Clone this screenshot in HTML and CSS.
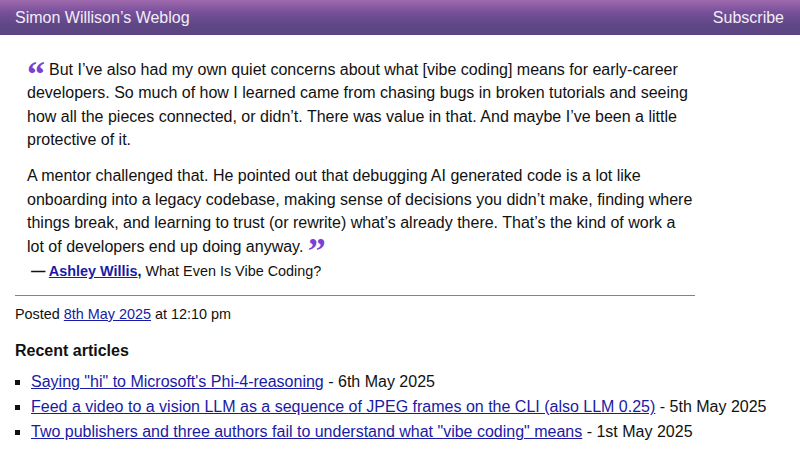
FILE: index.html
```html
<!DOCTYPE html>
<html>
<head>
<meta charset="utf-8">
<link rel="stylesheet" href="styles.css">
</head>
<body>
<header class="top">
  <a class="brand" href="#">Simon Willison’s Weblog</a>
  <a class="sub" href="#">Subscribe</a>
</header>
<main class="page">
  <div class="entry">
    <blockquote class="quote">
      <p><span class="qm open">“</span>But I’ve also had my own quiet concerns about what [vibe coding] means for early-career developers. So much of how I learned came from chasing bugs in broken tutorials and seeing how all the pieces connected, or didn’t. There was value in that. And maybe I’ve been a little protective of it.</p>
      <p>A mentor challenged that. He pointed out that debugging AI generated code is a lot like onboarding into a legacy codebase, making sense of decisions you didn’t make, finding where things break, and learning to trust (or rewrite) what’s already there. That’s the kind of work a lot of developers end up doing anyway. <span class="qm close">”</span></p>
    </blockquote>
    <p class="cite">— <a href="#">Ashley Willis</a>, <span class="src">What Even Is Vibe Coding?</span></p>
    <div class="meta">Posted <a href="#">8th May 2025</a> at 12:10 pm</div>
  </div>
  <section class="recent">
    <h3>Recent articles</h3>
    <ul>
      <li><a href="#">Saying "hi" to Microsoft's Phi-4-reasoning</a> - 6th May 2025</li>
      <li><a href="#">Feed a video to a vision LLM as a sequence of JPEG frames on the CLI (also LLM 0.25)</a> - 5th May 2025</li>
      <li><a href="#">Two publishers and three authors fail to understand what "vibe coding" means</a> - 1st May 2025</li>
    </ul>
  </section>
</main>
</body>
</html>
```
FILE: styles.css
```css
html, body {
  margin: 0;
  padding: 0;
  background: #fff;
}
body {
  font-family: "Liberation Sans", Arial, sans-serif;
  font-size: 16px;
  color: #111;
}
.top {
  display: flex;
  justify-content: space-between;
  align-items: center;
  height: 35px;
  padding: 0 16px 0 15px;
  background: linear-gradient(to bottom, #a06aae 0%, #76509a 35%, #5f4785 70%, #5d4482 100%);
}
.top a {
  color: #f3ecf8;
  text-decoration: none;
  font-size: 16px;
  line-height: 1;
}
.page {
  padding: 0 15px;
}
.entry {
  width: 680px;
}
.quote {
  margin: 23px 0 0 12px;
  padding: 0;
}
.quote p {
  margin: 0 0 12.7px;
  line-height: 23.4px;
}
.quote p:last-child {
  margin-bottom: 0;
}
.qm {
  display: inline-block;
  font-family: "Liberation Serif", "Times New Roman", serif;
  font-weight: bold;
  color: #7a3fd3;
  font-size: 36px;
  line-height: 10px;
  height: 10px;
  vertical-align: -11px;
}
.qm.open {
  margin-right: 4px;
}
.cite {
  margin: 3px 0 0;
  padding: 0 0 14px 16px;
  font-size: 14.4px;
  line-height: 20px;
  font-weight: bold;
  border-bottom: 1px solid #9a70aa;
}
.cite a {
  color: #1a1aa6;
  text-decoration: underline;
}
.cite .src {
  font-weight: normal;
}
.meta {
  font-size: 14.4px;
  line-height: 20px;
  margin-top: 8px;
}
.meta a {
  color: #1a1aa6;
}
.recent h3 {
  font-size: 16px;
  margin: 16px 0 7.5px;
  line-height: 22px;
}
.recent ul {
  margin: 0;
  padding-left: 16px;
  list-style: square;
}
.recent li {
  line-height: 25px;
}
.recent li a {
  color: #1a1aa6;
}
```
